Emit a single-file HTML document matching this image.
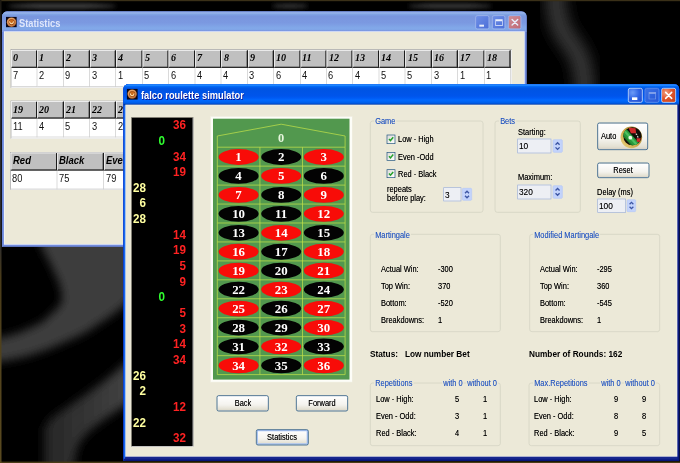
<!DOCTYPE html><html><head><meta charset="utf-8"><title>falco roulette simulator</title><style>
html,body{margin:0;padding:0;background:#000;}
body{width:680px;height:463px;overflow:hidden;position:relative;font-family:"Liberation Sans",sans-serif;}
.root{position:absolute;left:0;top:0;width:1020px;height:694.5px;transform:scale(0.6666667);transform-origin:0 0;overflow:hidden;}
.root div{position:absolute;box-sizing:border-box;white-space:nowrap;}
.tl{position:absolute;left:0;top:0;width:680px;height:463px;overflow:hidden;}
.tl div{position:absolute;white-space:nowrap;line-height:13.333px;}
.t{font-size:8.667px;color:#000;transform:scaleX(0.86);text-shadow:0 0 0.67px rgba(0,0,0,.6);}
.tb{font-size:9.2px;color:#000;font-weight:bold;transform:scaleX(0.9);}
.gl{font-size:8.667px;color:#2456c0;background:#ece9d8;padding:0 1.33px;transform:scaleX(0.86);text-shadow:0 0 0.67px rgba(28,80,200,.45);}
.win{background:#ece9d8;}
.title{color:#fff;font-weight:bold;font-size:10px;text-shadow:0.67px 0.67px #0f1089;transform:scaleX(0.93);}
.grp{border:1px solid #d0d0bf;border-radius:4px;}
.btn{border:1px solid #003c74;border-radius:3px;background:linear-gradient(#fff 0%,#f4f3ee 60%,#e3e0d2 90%,#d6d0c5 100%);font-size:11px;color:#111;text-align:center;}
.inp{border:1px solid #9eb0d4;background:#edeff4;font-size:12px;color:#111;}
.iv{font-size:9.667px;color:#000;transform:scaleX(0.86);text-shadow:0 0 0.67px rgba(0,0,0,.4);}
.spin{background:#c3d3fb;border:1px solid #b5c8f7;border-radius:2px;}
.chk{border:1px solid #1c5180;background:linear-gradient(135deg,#dcdcd7,#fff);}
.hn{font-weight:bold;font-size:12.667px;transform:scaleX(0.92);}
.bn{font-family:"Liberation Serif",serif;font-weight:bold;font-size:15.5px;color:#fff;text-align:center;}
.th{font-family:"Liberation Serif",serif;font-weight:bold;font-style:italic;font-size:10.667px;color:#000;transform:scaleX(0.95);}
.th3{font-weight:bold;font-style:italic;font-size:10px;color:#000;transform:scaleX(0.95);}
.td{font-size:10px;color:#111;transform:scaleX(0.93);}
</style></head><body><div class="root" style="background:#000">
<svg style="position:absolute;left:0;top:0" width="1020" height="694.5" viewBox="0 0 680 463">
<defs><filter id="bl" x="-50%" y="-50%" width="200%" height="200%"><feGaussianBlur stdDeviation="7"/></filter>
<filter id="bl2" x="-50%" y="-50%" width="200%" height="200%"><feGaussianBlur stdDeviation="5"/></filter>
<filter id="bl3" x="-20%" y="-200%" width="140%" height="500%"><feGaussianBlur stdDeviation="2.2"/></filter><linearGradient id="ls" x1="0" y1="0" x2="0" y2="1"><stop offset="0" stop-color="#1c1810"/><stop offset="0.1" stop-color="#2a2a32"/><stop offset="0.52" stop-color="#2c2c30"/><stop offset="0.6" stop-color="#4a3c1a"/><stop offset="1" stop-color="#5a4a20"/></linearGradient><linearGradient id="g2" x1="0" x2="1"><stop offset="0" stop-color="#262626"/><stop offset="1" stop-color="#464646"/></linearGradient></defs>
<rect width="680" height="463" fill="#000"/>
<g filter="url(#bl)" fill="none" stroke-linecap="round">
<path d="M555,-10 C556,20 560,30 572,45 C582,58 584,70 585,95" stroke="#363636" stroke-width="20"/>
</g>
<g filter="url(#bl2)">
<path d="M38,235 L140,235 L140,292 C124,306 112,316 100,323 C90,330 82,335 72,339 C60,344 50,349 40,352 C26,357 12,360 -10,363 L-10,339 C8,337 20,333 30,328 C40,324 46,320 50,315 C58,308 63,304 62,296 C61,286 58,280 55,274 C50,262 46,256 42,248 Z" fill="#3d3d3d"/>
<path d="M140,352 C120,368 104,382 88,393 C74,403 62,410 53,417 C47,422 44,426 44,432 L44,475 L73,475 C74,464 75,454 78,446 C82,438 88,432 93,428 C108,416 124,406 140,396 Z" fill="url(#g2)"/>
</g>
<g filter="url(#bl3)"><ellipse cx="62" cy="6" rx="54" ry="2.6" fill="#444"/><ellipse cx="290" cy="6" rx="18" ry="2.4" fill="#333"/><ellipse cx="450" cy="6" rx="42" ry="2.6" fill="#3a3a3a"/></g>
<rect x="0" y="0" width="680" height="1.2" fill="#3a3018"/>
<rect x="0" y="461.6" width="680" height="1.4" fill="#4a3c18"/>
<rect x="0" y="0" width="1.5" height="463" fill="url(#ls)"/>
</svg>
<div style="left:2.70px;top:16.95px;width:787.05px;height:353.55px;border-radius:8px 8px 0 0;background:#7a93df;overflow:hidden;box-shadow:inset 1.5px 0 #6a86dc, inset -1.5px -1.5px #5e78cf;">
<div style="left:0.00px;top:0.00px;width:787.05px;height:31.50px;background:linear-gradient(to bottom,#7697e7 0%,#7e9ee3 3%,#94afe8 6%,#97b4e9 8%,#82a5e4 14%,#7c9fe2 17%,#7996de 25%,#7b99e1 56%,#82a9e9 81%,#80a5e7 89%,#7b96e1 94%,#7a93df 97%,#abbae3 100%);"></div>
<div style="left:4.20px;top:31.50px;width:778.80px;height:317.55px;background:#ece9d8;box-shadow:0 0 0 1px #f4f6fd;"></div>
<svg style="position:absolute;left:6.00px;top:7.65px" width="16.65" height="16.65" viewBox="0 0 16 16"><defs><radialGradient id="ig1" cx="0.45" cy="0.4" r="0.6"><stop offset="0" stop-color="#f6c090"/><stop offset="0.6" stop-color="#e09a5c"/><stop offset="1" stop-color="#a85a24"/></radialGradient></defs><rect width="16" height="16" fill="#090618"/><circle cx="8" cy="8" r="6.9" fill="url(#ig1)"/><circle cx="8" cy="7.8" r="4.5" fill="#a04c12"/><circle cx="8" cy="7.4" r="3.2" fill="#c86a1c"/><path d="M5.3,7.4 C5.5,11.2 10.5,11.2 10.7,7.4" fill="none" stroke="#ffe6b4" stroke-width="1.5" stroke-linecap="round"/></svg>

<div style="left:710.70px;top:6.45px;width:20.40px;height:20.40px;background:linear-gradient(135deg,#6e8fe6,#4c6fd8);border:1px solid #a9bbee;border-radius:3px;"><div style="left:4.49px;top:12.65px;width:7.34px;height:2.86px;background:#e8eefc"></div></div>
<div style="left:735.00px;top:6.45px;width:20.40px;height:20.40px;background:linear-gradient(135deg,#6e8fe6,#4c6fd8);border:1px solid #a9bbee;border-radius:3px;"><div style="left:4.49px;top:4.49px;width:10.61px;height:10.61px;border:1.2px solid #e8eefc;border-top-width:3px"></div></div>
<div style="left:759.00px;top:6.45px;width:20.70px;height:20.40px;background:linear-gradient(135deg,#cf8f98,#bf6875);border:1px solid #a9bbee;border-radius:3px;"><svg style="position:absolute;left:0;top:0" width="18.70" height="18.70" viewBox="0 0 20 20"><path d="M5.5,5.5 L14.5,14.5 M14.5,5.5 L5.5,14.5" stroke="#e8eefc" stroke-width="2.3" stroke-linecap="round"/></svg></div>
<div style="left:12.90px;top:57.00px;width:751.95px;height:57.75px;background:#fff;border:1px solid #9a9a9a;border-right-color:#e8e8e8;border-bottom-color:#e8e8e8;"></div><div style="left:13.95px;top:58.05px;width:39.45px;height:26.70px;background:#c0c0c0;border-left:1px solid #fff;border-top:1px solid #fff;border-right:2px solid #1c1c1c;border-bottom:2px solid #2c2c2c;"></div><div style="left:13.95px;top:84.75px;width:39.45px;height:28.65px;border-right:1px solid #c8c8c8;border-bottom:1px solid #c8c8c8;"></div><div style="left:53.40px;top:58.05px;width:39.45px;height:26.70px;background:#c0c0c0;border-left:1px solid #fff;border-top:1px solid #fff;border-right:2px solid #1c1c1c;border-bottom:2px solid #2c2c2c;"></div><div style="left:53.40px;top:84.75px;width:39.45px;height:28.65px;border-right:1px solid #c8c8c8;border-bottom:1px solid #c8c8c8;"></div><div style="left:92.85px;top:58.05px;width:39.45px;height:26.70px;background:#c0c0c0;border-left:1px solid #fff;border-top:1px solid #fff;border-right:2px solid #1c1c1c;border-bottom:2px solid #2c2c2c;"></div><div style="left:92.85px;top:84.75px;width:39.45px;height:28.65px;border-right:1px solid #c8c8c8;border-bottom:1px solid #c8c8c8;"></div><div style="left:132.30px;top:58.05px;width:39.45px;height:26.70px;background:#c0c0c0;border-left:1px solid #fff;border-top:1px solid #fff;border-right:2px solid #1c1c1c;border-bottom:2px solid #2c2c2c;"></div><div style="left:132.30px;top:84.75px;width:39.45px;height:28.65px;border-right:1px solid #c8c8c8;border-bottom:1px solid #c8c8c8;"></div><div style="left:171.75px;top:58.05px;width:39.45px;height:26.70px;background:#c0c0c0;border-left:1px solid #fff;border-top:1px solid #fff;border-right:2px solid #1c1c1c;border-bottom:2px solid #2c2c2c;"></div><div style="left:171.75px;top:84.75px;width:39.45px;height:28.65px;border-right:1px solid #c8c8c8;border-bottom:1px solid #c8c8c8;"></div><div style="left:211.20px;top:58.05px;width:39.45px;height:26.70px;background:#c0c0c0;border-left:1px solid #fff;border-top:1px solid #fff;border-right:2px solid #1c1c1c;border-bottom:2px solid #2c2c2c;"></div><div style="left:211.20px;top:84.75px;width:39.45px;height:28.65px;border-right:1px solid #c8c8c8;border-bottom:1px solid #c8c8c8;"></div><div style="left:250.65px;top:58.05px;width:39.45px;height:26.70px;background:#c0c0c0;border-left:1px solid #fff;border-top:1px solid #fff;border-right:2px solid #1c1c1c;border-bottom:2px solid #2c2c2c;"></div><div style="left:250.65px;top:84.75px;width:39.45px;height:28.65px;border-right:1px solid #c8c8c8;border-bottom:1px solid #c8c8c8;"></div><div style="left:290.10px;top:58.05px;width:39.45px;height:26.70px;background:#c0c0c0;border-left:1px solid #fff;border-top:1px solid #fff;border-right:2px solid #1c1c1c;border-bottom:2px solid #2c2c2c;"></div><div style="left:290.10px;top:84.75px;width:39.45px;height:28.65px;border-right:1px solid #c8c8c8;border-bottom:1px solid #c8c8c8;"></div><div style="left:329.55px;top:58.05px;width:39.45px;height:26.70px;background:#c0c0c0;border-left:1px solid #fff;border-top:1px solid #fff;border-right:2px solid #1c1c1c;border-bottom:2px solid #2c2c2c;"></div><div style="left:329.55px;top:84.75px;width:39.45px;height:28.65px;border-right:1px solid #c8c8c8;border-bottom:1px solid #c8c8c8;"></div><div style="left:369.00px;top:58.05px;width:39.45px;height:26.70px;background:#c0c0c0;border-left:1px solid #fff;border-top:1px solid #fff;border-right:2px solid #1c1c1c;border-bottom:2px solid #2c2c2c;"></div><div style="left:369.00px;top:84.75px;width:39.45px;height:28.65px;border-right:1px solid #c8c8c8;border-bottom:1px solid #c8c8c8;"></div><div style="left:408.45px;top:58.05px;width:39.45px;height:26.70px;background:#c0c0c0;border-left:1px solid #fff;border-top:1px solid #fff;border-right:2px solid #1c1c1c;border-bottom:2px solid #2c2c2c;"></div><div style="left:408.45px;top:84.75px;width:39.45px;height:28.65px;border-right:1px solid #c8c8c8;border-bottom:1px solid #c8c8c8;"></div><div style="left:447.90px;top:58.05px;width:39.45px;height:26.70px;background:#c0c0c0;border-left:1px solid #fff;border-top:1px solid #fff;border-right:2px solid #1c1c1c;border-bottom:2px solid #2c2c2c;"></div><div style="left:447.90px;top:84.75px;width:39.45px;height:28.65px;border-right:1px solid #c8c8c8;border-bottom:1px solid #c8c8c8;"></div><div style="left:487.35px;top:58.05px;width:39.45px;height:26.70px;background:#c0c0c0;border-left:1px solid #fff;border-top:1px solid #fff;border-right:2px solid #1c1c1c;border-bottom:2px solid #2c2c2c;"></div><div style="left:487.35px;top:84.75px;width:39.45px;height:28.65px;border-right:1px solid #c8c8c8;border-bottom:1px solid #c8c8c8;"></div><div style="left:526.80px;top:58.05px;width:39.45px;height:26.70px;background:#c0c0c0;border-left:1px solid #fff;border-top:1px solid #fff;border-right:2px solid #1c1c1c;border-bottom:2px solid #2c2c2c;"></div><div style="left:526.80px;top:84.75px;width:39.45px;height:28.65px;border-right:1px solid #c8c8c8;border-bottom:1px solid #c8c8c8;"></div><div style="left:566.25px;top:58.05px;width:39.45px;height:26.70px;background:#c0c0c0;border-left:1px solid #fff;border-top:1px solid #fff;border-right:2px solid #1c1c1c;border-bottom:2px solid #2c2c2c;"></div><div style="left:566.25px;top:84.75px;width:39.45px;height:28.65px;border-right:1px solid #c8c8c8;border-bottom:1px solid #c8c8c8;"></div><div style="left:605.70px;top:58.05px;width:39.45px;height:26.70px;background:#c0c0c0;border-left:1px solid #fff;border-top:1px solid #fff;border-right:2px solid #1c1c1c;border-bottom:2px solid #2c2c2c;"></div><div style="left:605.70px;top:84.75px;width:39.45px;height:28.65px;border-right:1px solid #c8c8c8;border-bottom:1px solid #c8c8c8;"></div><div style="left:645.15px;top:58.05px;width:39.45px;height:26.70px;background:#c0c0c0;border-left:1px solid #fff;border-top:1px solid #fff;border-right:2px solid #1c1c1c;border-bottom:2px solid #2c2c2c;"></div><div style="left:645.15px;top:84.75px;width:39.45px;height:28.65px;border-right:1px solid #c8c8c8;border-bottom:1px solid #c8c8c8;"></div><div style="left:684.60px;top:58.05px;width:39.45px;height:26.70px;background:#c0c0c0;border-left:1px solid #fff;border-top:1px solid #fff;border-right:2px solid #1c1c1c;border-bottom:2px solid #2c2c2c;"></div><div style="left:684.60px;top:84.75px;width:39.45px;height:28.65px;border-right:1px solid #c8c8c8;border-bottom:1px solid #c8c8c8;"></div><div style="left:724.05px;top:58.05px;width:39.45px;height:26.70px;background:#c0c0c0;border-left:1px solid #fff;border-top:1px solid #fff;border-right:2px solid #1c1c1c;border-bottom:2px solid #2c2c2c;"></div><div style="left:724.05px;top:84.75px;width:39.45px;height:28.65px;border-right:1px solid #c8c8c8;border-bottom:1px solid #c8c8c8;"></div>
<div style="left:12.90px;top:134.40px;width:712.50px;height:56.40px;background:#fff;border:1px solid #9a9a9a;border-right-color:#e8e8e8;border-bottom-color:#e8e8e8;"></div><div style="left:13.95px;top:135.45px;width:39.45px;height:25.95px;background:#c0c0c0;border-left:1px solid #fff;border-top:1px solid #fff;border-right:2px solid #1c1c1c;border-bottom:2px solid #2c2c2c;"></div><div style="left:13.95px;top:161.40px;width:39.45px;height:28.05px;border-right:1px solid #c8c8c8;border-bottom:1px solid #c8c8c8;"></div><div style="left:53.40px;top:135.45px;width:39.45px;height:25.95px;background:#c0c0c0;border-left:1px solid #fff;border-top:1px solid #fff;border-right:2px solid #1c1c1c;border-bottom:2px solid #2c2c2c;"></div><div style="left:53.40px;top:161.40px;width:39.45px;height:28.05px;border-right:1px solid #c8c8c8;border-bottom:1px solid #c8c8c8;"></div><div style="left:92.85px;top:135.45px;width:39.45px;height:25.95px;background:#c0c0c0;border-left:1px solid #fff;border-top:1px solid #fff;border-right:2px solid #1c1c1c;border-bottom:2px solid #2c2c2c;"></div><div style="left:92.85px;top:161.40px;width:39.45px;height:28.05px;border-right:1px solid #c8c8c8;border-bottom:1px solid #c8c8c8;"></div><div style="left:132.30px;top:135.45px;width:39.45px;height:25.95px;background:#c0c0c0;border-left:1px solid #fff;border-top:1px solid #fff;border-right:2px solid #1c1c1c;border-bottom:2px solid #2c2c2c;"></div><div style="left:132.30px;top:161.40px;width:39.45px;height:28.05px;border-right:1px solid #c8c8c8;border-bottom:1px solid #c8c8c8;"></div><div style="left:171.75px;top:135.45px;width:39.45px;height:25.95px;background:#c0c0c0;border-left:1px solid #fff;border-top:1px solid #fff;border-right:2px solid #1c1c1c;border-bottom:2px solid #2c2c2c;"></div><div style="left:171.75px;top:161.40px;width:39.45px;height:28.05px;border-right:1px solid #c8c8c8;border-bottom:1px solid #c8c8c8;"></div><div style="left:211.20px;top:135.45px;width:39.45px;height:25.95px;background:#c0c0c0;border-left:1px solid #fff;border-top:1px solid #fff;border-right:2px solid #1c1c1c;border-bottom:2px solid #2c2c2c;"></div><div style="left:211.20px;top:161.40px;width:39.45px;height:28.05px;border-right:1px solid #c8c8c8;border-bottom:1px solid #c8c8c8;"></div><div style="left:250.65px;top:135.45px;width:39.45px;height:25.95px;background:#c0c0c0;border-left:1px solid #fff;border-top:1px solid #fff;border-right:2px solid #1c1c1c;border-bottom:2px solid #2c2c2c;"></div><div style="left:250.65px;top:161.40px;width:39.45px;height:28.05px;border-right:1px solid #c8c8c8;border-bottom:1px solid #c8c8c8;"></div><div style="left:290.10px;top:135.45px;width:39.45px;height:25.95px;background:#c0c0c0;border-left:1px solid #fff;border-top:1px solid #fff;border-right:2px solid #1c1c1c;border-bottom:2px solid #2c2c2c;"></div><div style="left:290.10px;top:161.40px;width:39.45px;height:28.05px;border-right:1px solid #c8c8c8;border-bottom:1px solid #c8c8c8;"></div><div style="left:329.55px;top:135.45px;width:39.45px;height:25.95px;background:#c0c0c0;border-left:1px solid #fff;border-top:1px solid #fff;border-right:2px solid #1c1c1c;border-bottom:2px solid #2c2c2c;"></div><div style="left:329.55px;top:161.40px;width:39.45px;height:28.05px;border-right:1px solid #c8c8c8;border-bottom:1px solid #c8c8c8;"></div><div style="left:369.00px;top:135.45px;width:39.45px;height:25.95px;background:#c0c0c0;border-left:1px solid #fff;border-top:1px solid #fff;border-right:2px solid #1c1c1c;border-bottom:2px solid #2c2c2c;"></div><div style="left:369.00px;top:161.40px;width:39.45px;height:28.05px;border-right:1px solid #c8c8c8;border-bottom:1px solid #c8c8c8;"></div><div style="left:408.45px;top:135.45px;width:39.45px;height:25.95px;background:#c0c0c0;border-left:1px solid #fff;border-top:1px solid #fff;border-right:2px solid #1c1c1c;border-bottom:2px solid #2c2c2c;"></div><div style="left:408.45px;top:161.40px;width:39.45px;height:28.05px;border-right:1px solid #c8c8c8;border-bottom:1px solid #c8c8c8;"></div><div style="left:447.90px;top:135.45px;width:39.45px;height:25.95px;background:#c0c0c0;border-left:1px solid #fff;border-top:1px solid #fff;border-right:2px solid #1c1c1c;border-bottom:2px solid #2c2c2c;"></div><div style="left:447.90px;top:161.40px;width:39.45px;height:28.05px;border-right:1px solid #c8c8c8;border-bottom:1px solid #c8c8c8;"></div><div style="left:487.35px;top:135.45px;width:39.45px;height:25.95px;background:#c0c0c0;border-left:1px solid #fff;border-top:1px solid #fff;border-right:2px solid #1c1c1c;border-bottom:2px solid #2c2c2c;"></div><div style="left:487.35px;top:161.40px;width:39.45px;height:28.05px;border-right:1px solid #c8c8c8;border-bottom:1px solid #c8c8c8;"></div><div style="left:526.80px;top:135.45px;width:39.45px;height:25.95px;background:#c0c0c0;border-left:1px solid #fff;border-top:1px solid #fff;border-right:2px solid #1c1c1c;border-bottom:2px solid #2c2c2c;"></div><div style="left:526.80px;top:161.40px;width:39.45px;height:28.05px;border-right:1px solid #c8c8c8;border-bottom:1px solid #c8c8c8;"></div><div style="left:566.25px;top:135.45px;width:39.45px;height:25.95px;background:#c0c0c0;border-left:1px solid #fff;border-top:1px solid #fff;border-right:2px solid #1c1c1c;border-bottom:2px solid #2c2c2c;"></div><div style="left:566.25px;top:161.40px;width:39.45px;height:28.05px;border-right:1px solid #c8c8c8;border-bottom:1px solid #c8c8c8;"></div><div style="left:605.70px;top:135.45px;width:39.45px;height:25.95px;background:#c0c0c0;border-left:1px solid #fff;border-top:1px solid #fff;border-right:2px solid #1c1c1c;border-bottom:2px solid #2c2c2c;"></div><div style="left:605.70px;top:161.40px;width:39.45px;height:28.05px;border-right:1px solid #c8c8c8;border-bottom:1px solid #c8c8c8;"></div><div style="left:645.15px;top:135.45px;width:39.45px;height:25.95px;background:#c0c0c0;border-left:1px solid #fff;border-top:1px solid #fff;border-right:2px solid #1c1c1c;border-bottom:2px solid #2c2c2c;"></div><div style="left:645.15px;top:161.40px;width:39.45px;height:28.05px;border-right:1px solid #c8c8c8;border-bottom:1px solid #c8c8c8;"></div><div style="left:684.60px;top:135.45px;width:39.45px;height:25.95px;background:#c0c0c0;border-left:1px solid #fff;border-top:1px solid #fff;border-right:2px solid #1c1c1c;border-bottom:2px solid #2c2c2c;"></div><div style="left:684.60px;top:161.40px;width:39.45px;height:28.05px;border-right:1px solid #c8c8c8;border-bottom:1px solid #c8c8c8;"></div>
<div style="left:12.45px;top:211.20px;width:421.80px;height:57.15px;background:#fff;border:1px solid #9a9a9a;border-right-color:#e8e8e8;border-bottom-color:#e8e8e8;"></div><div style="left:13.50px;top:212.25px;width:69.90px;height:26.70px;background:#c0c0c0;border-left:1px solid #fff;border-top:1px solid #fff;border-right:2px solid #1c1c1c;border-bottom:2px solid #2c2c2c;"></div><div style="left:13.50px;top:238.95px;width:69.90px;height:28.05px;border-right:1px solid #c8c8c8;border-bottom:1px solid #c8c8c8;"></div><div style="left:83.40px;top:212.25px;width:69.90px;height:26.70px;background:#c0c0c0;border-left:1px solid #fff;border-top:1px solid #fff;border-right:2px solid #1c1c1c;border-bottom:2px solid #2c2c2c;"></div><div style="left:83.40px;top:238.95px;width:69.90px;height:28.05px;border-right:1px solid #c8c8c8;border-bottom:1px solid #c8c8c8;"></div><div style="left:153.30px;top:212.25px;width:69.90px;height:26.70px;background:#c0c0c0;border-left:1px solid #fff;border-top:1px solid #fff;border-right:2px solid #1c1c1c;border-bottom:2px solid #2c2c2c;"></div><div style="left:153.30px;top:238.95px;width:69.90px;height:28.05px;border-right:1px solid #c8c8c8;border-bottom:1px solid #c8c8c8;"></div><div style="left:223.20px;top:212.25px;width:69.90px;height:26.70px;background:#c0c0c0;border-left:1px solid #fff;border-top:1px solid #fff;border-right:2px solid #1c1c1c;border-bottom:2px solid #2c2c2c;"></div><div style="left:223.20px;top:238.95px;width:69.90px;height:28.05px;border-right:1px solid #c8c8c8;border-bottom:1px solid #c8c8c8;"></div><div style="left:293.10px;top:212.25px;width:69.90px;height:26.70px;background:#c0c0c0;border-left:1px solid #fff;border-top:1px solid #fff;border-right:2px solid #1c1c1c;border-bottom:2px solid #2c2c2c;"></div><div style="left:293.10px;top:238.95px;width:69.90px;height:28.05px;border-right:1px solid #c8c8c8;border-bottom:1px solid #c8c8c8;"></div><div style="left:363.00px;top:212.25px;width:69.90px;height:26.70px;background:#c0c0c0;border-left:1px solid #fff;border-top:1px solid #fff;border-right:2px solid #1c1c1c;border-bottom:2px solid #2c2c2c;"></div><div style="left:363.00px;top:238.95px;width:69.90px;height:28.05px;border-right:1px solid #c8c8c8;border-bottom:1px solid #c8c8c8;"></div>
</div></div>
<div class="tl"><div class="title" style="top:17.13px;left:19.30px;transform-origin:0 50%;color:#dfe7fb;text-shadow:none;">Statistics</div><div class="th" style="top:51.33px;left:13.10px;transform-origin:0 50%;">0</div><div class="td" style="top:69.48px;left:12.70px;transform-origin:0 50%;">7</div><div class="th" style="top:51.33px;left:39.40px;transform-origin:0 50%;">1</div><div class="td" style="top:69.48px;left:39.00px;transform-origin:0 50%;">2</div><div class="th" style="top:51.33px;left:65.70px;transform-origin:0 50%;">2</div><div class="td" style="top:69.48px;left:65.30px;transform-origin:0 50%;">9</div><div class="th" style="top:51.33px;left:92.00px;transform-origin:0 50%;">3</div><div class="td" style="top:69.48px;left:91.60px;transform-origin:0 50%;">3</div><div class="th" style="top:51.33px;left:118.30px;transform-origin:0 50%;">4</div><div class="td" style="top:69.48px;left:117.90px;transform-origin:0 50%;">1</div><div class="th" style="top:51.33px;left:144.60px;transform-origin:0 50%;">5</div><div class="td" style="top:69.48px;left:144.20px;transform-origin:0 50%;">5</div><div class="th" style="top:51.33px;left:170.90px;transform-origin:0 50%;">6</div><div class="td" style="top:69.48px;left:170.50px;transform-origin:0 50%;">6</div><div class="th" style="top:51.33px;left:197.20px;transform-origin:0 50%;">7</div><div class="td" style="top:69.48px;left:196.80px;transform-origin:0 50%;">4</div><div class="th" style="top:51.33px;left:223.50px;transform-origin:0 50%;">8</div><div class="td" style="top:69.48px;left:223.10px;transform-origin:0 50%;">4</div><div class="th" style="top:51.33px;left:249.80px;transform-origin:0 50%;">9</div><div class="td" style="top:69.48px;left:249.40px;transform-origin:0 50%;">3</div><div class="th" style="top:51.33px;left:276.10px;transform-origin:0 50%;">10</div><div class="td" style="top:69.48px;left:275.70px;transform-origin:0 50%;">6</div><div class="th" style="top:51.33px;left:302.40px;transform-origin:0 50%;">11</div><div class="td" style="top:69.48px;left:302.00px;transform-origin:0 50%;">4</div><div class="th" style="top:51.33px;left:328.70px;transform-origin:0 50%;">12</div><div class="td" style="top:69.48px;left:328.30px;transform-origin:0 50%;">6</div><div class="th" style="top:51.33px;left:355.00px;transform-origin:0 50%;">13</div><div class="td" style="top:69.48px;left:354.60px;transform-origin:0 50%;">4</div><div class="th" style="top:51.33px;left:381.30px;transform-origin:0 50%;">14</div><div class="td" style="top:69.48px;left:380.90px;transform-origin:0 50%;">5</div><div class="th" style="top:51.33px;left:407.60px;transform-origin:0 50%;">15</div><div class="td" style="top:69.48px;left:407.20px;transform-origin:0 50%;">5</div><div class="th" style="top:51.33px;left:433.90px;transform-origin:0 50%;">16</div><div class="td" style="top:69.48px;left:433.50px;transform-origin:0 50%;">3</div><div class="th" style="top:51.33px;left:460.20px;transform-origin:0 50%;">17</div><div class="td" style="top:69.48px;left:459.80px;transform-origin:0 50%;">1</div><div class="th" style="top:51.33px;left:486.50px;transform-origin:0 50%;">18</div><div class="td" style="top:69.48px;left:486.10px;transform-origin:0 50%;">1</div><div class="th" style="top:102.68px;left:13.10px;transform-origin:0 50%;">19</div><div class="td" style="top:120.38px;left:12.70px;transform-origin:0 50%;">11</div><div class="th" style="top:102.68px;left:39.40px;transform-origin:0 50%;">20</div><div class="td" style="top:120.38px;left:39.00px;transform-origin:0 50%;">4</div><div class="th" style="top:102.68px;left:65.70px;transform-origin:0 50%;">21</div><div class="td" style="top:120.38px;left:65.30px;transform-origin:0 50%;">5</div><div class="th" style="top:102.68px;left:92.00px;transform-origin:0 50%;">22</div><div class="td" style="top:120.38px;left:91.60px;transform-origin:0 50%;">3</div><div class="th" style="top:102.68px;left:118.30px;transform-origin:0 50%;">23</div><div class="td" style="top:120.38px;left:117.90px;transform-origin:0 50%;">2</div><div class="th" style="top:102.68px;left:144.60px;transform-origin:0 50%;">24</div><div class="td" style="top:120.38px;left:144.20px;transform-origin:0 50%;">6</div><div class="th" style="top:102.68px;left:170.90px;transform-origin:0 50%;">25</div><div class="td" style="top:120.38px;left:170.50px;transform-origin:0 50%;">3</div><div class="th" style="top:102.68px;left:197.20px;transform-origin:0 50%;">26</div><div class="td" style="top:120.38px;left:196.80px;transform-origin:0 50%;">4</div><div class="th" style="top:102.68px;left:223.50px;transform-origin:0 50%;">27</div><div class="td" style="top:120.38px;left:223.10px;transform-origin:0 50%;">2</div><div class="th" style="top:102.68px;left:249.80px;transform-origin:0 50%;">28</div><div class="td" style="top:120.38px;left:249.40px;transform-origin:0 50%;">5</div><div class="th" style="top:102.68px;left:276.10px;transform-origin:0 50%;">29</div><div class="td" style="top:120.38px;left:275.70px;transform-origin:0 50%;">7</div><div class="th" style="top:102.68px;left:302.40px;transform-origin:0 50%;">30</div><div class="td" style="top:120.38px;left:302.00px;transform-origin:0 50%;">3</div><div class="th" style="top:102.68px;left:328.70px;transform-origin:0 50%;">31</div><div class="td" style="top:120.38px;left:328.30px;transform-origin:0 50%;">6</div><div class="th" style="top:102.68px;left:355.00px;transform-origin:0 50%;">32</div><div class="td" style="top:120.38px;left:354.60px;transform-origin:0 50%;">4</div><div class="th" style="top:102.68px;left:381.30px;transform-origin:0 50%;">33</div><div class="td" style="top:120.38px;left:380.90px;transform-origin:0 50%;">3</div><div class="th" style="top:102.68px;left:407.60px;transform-origin:0 50%;">34</div><div class="td" style="top:120.38px;left:407.20px;transform-origin:0 50%;">5</div><div class="th" style="top:102.68px;left:433.90px;transform-origin:0 50%;">35</div><div class="td" style="top:120.38px;left:433.50px;transform-origin:0 50%;">4</div><div class="th" style="top:102.68px;left:460.20px;transform-origin:0 50%;">36</div><div class="td" style="top:120.38px;left:459.80px;transform-origin:0 50%;">6</div><div class="th3" style="top:154.13px;left:12.80px;transform-origin:0 50%;">Red</div><div class="td" style="top:172.08px;left:12.40px;transform-origin:0 50%;">80</div><div class="th3" style="top:154.13px;left:59.40px;transform-origin:0 50%;">Black</div><div class="td" style="top:172.08px;left:59.00px;transform-origin:0 50%;">75</div><div class="th3" style="top:154.13px;left:106.00px;transform-origin:0 50%;">Even</div><div class="td" style="top:172.08px;left:105.60px;transform-origin:0 50%;">79</div><div class="th3" style="top:154.13px;left:152.60px;transform-origin:0 50%;">Odd</div><div class="td" style="top:172.08px;left:152.20px;transform-origin:0 50%;">76</div><div class="th3" style="top:154.13px;left:199.20px;transform-origin:0 50%;">Low</div><div class="td" style="top:172.08px;left:198.80px;transform-origin:0 50%;">82</div><div class="th3" style="top:154.13px;left:245.80px;transform-origin:0 50%;">High</div><div class="td" style="top:172.08px;left:245.40px;transform-origin:0 50%;">73</div></div>
<div class="root">
<div style="left:184.50px;top:126.45px;width:834.90px;height:565.05px;border-radius:8px 8px 0 0;background:#14248a;overflow:hidden;box-shadow:inset -1px -1px #000f70, inset 1px 1px #0831d9, inset -3px -3px #0c1c84, inset 2.5px 2.5px #166aee, inset -5px -5px #182890, inset 4px 4px #0855dd;">
<div style="left:0.00px;top:0.00px;width:834.90px;height:31.65px;background:linear-gradient(to bottom,#0058ee 0%,#3593ff 4%,#288eff 6%,#127dff 8%,#036ffc 10%,#0262ee 14%,#0057e5 20%,#0054e3 24%,#0055eb 56%,#005bf5 66%,#026afe 76%,#0062ef 86%,#0052d6 92%,#0040ab 94%,#003092 100%);"></div>
<div style="left:4.20px;top:31.65px;width:826.20px;height:526.20px;background:#ece9d8;box-shadow:0 0 0 1px #f6f6f2;"></div>
<svg style="position:absolute;left:5.55px;top:6.75px" width="16.50" height="16.35" viewBox="0 0 16 16"><defs><radialGradient id="ig2" cx="0.45" cy="0.4" r="0.6"><stop offset="0" stop-color="#f6c090"/><stop offset="0.6" stop-color="#e09a5c"/><stop offset="1" stop-color="#a85a24"/></radialGradient></defs><rect width="16" height="16" fill="#090618"/><circle cx="8" cy="8" r="6.9" fill="url(#ig2)"/><circle cx="8" cy="7.8" r="4.5" fill="#a04c12"/><circle cx="8" cy="7.4" r="3.2" fill="#c86a1c"/><path d="M5.3,7.4 C5.5,11.2 10.5,11.2 10.7,7.4" fill="none" stroke="#ffe6b4" stroke-width="1.5" stroke-linecap="round"/></svg>

<div style="left:757.50px;top:5.40px;width:22.05px;height:22.20px;background:radial-gradient(circle at 30% 30%,#6d9cf7 0%,#2f63e4 50%,#1f48c8 100%);border:1px solid #fff;border-radius:3px;"><div style="left:4.85px;top:13.67px;width:7.94px;height:3.09px;background:#fff"></div></div>
<div style="left:782.40px;top:5.40px;width:22.05px;height:22.20px;background:linear-gradient(135deg,#3a72e6,#2456d8);border:1px solid #7f9fef;border-radius:3px;"><div style="left:4.85px;top:4.85px;width:11.47px;height:11.47px;border:1.2px solid #7d9eea;border-top-width:3px"></div></div>
<div style="left:807.30px;top:5.40px;width:22.05px;height:22.20px;background:radial-gradient(circle at 30% 30%,#f0a080 0%,#e0562e 45%,#c23a12 100%);border:1px solid #fff;border-radius:3px;"><svg style="position:absolute;left:0;top:0" width="20.05" height="20.05" viewBox="0 0 20 20"><path d="M5.5,5.5 L14.5,14.5 M14.5,5.5 L5.5,14.5" stroke="#fff" stroke-width="2.3" stroke-linecap="round"/></svg></div>
<div style="left:12.75px;top:49.50px;width:92.70px;height:493.65px;background:#000;border:1px solid #9c9a8c;border-right-color:#fff;border-bottom-color:#fff;"></div>





















<svg style="position:absolute;left:130.35px;top:47.85px" width="214.05" height="399.90" viewBox="209.9 116.2 142.70000000000002 266.6"><rect x="209.9" y="116.2" width="142.70000000000002" height="266.6" fill="#f1efe2"/><rect x="210.9" y="117.1" width="140.99999999999997" height="264.9" fill="#fdfdf8"/><rect x="212.9" y="118.9" width="136.49999999999997" height="260.9" fill="#52984e"/><g stroke="#bfe04a" stroke-width="0.75" fill="none"><path d="M217.2,147.4 L217.2,136.2 L281.1,124.4 L345.0,136.2 L345.0,147.4"/><path d="M217.2,147.4 L217.2,374.80"/><path d="M259.8,147.4 L259.8,374.80"/><path d="M302.4,147.4 L302.4,374.80"/><path d="M345.0,147.4 L345.0,374.80"/><path d="M217.2,147.40 L345.0,147.40"/><path d="M217.2,166.35 L345.0,166.35"/><path d="M217.2,185.30 L345.0,185.30"/><path d="M217.2,204.25 L345.0,204.25"/><path d="M217.2,223.20 L345.0,223.20"/><path d="M217.2,242.15 L345.0,242.15"/><path d="M217.2,261.10 L345.0,261.10"/><path d="M217.2,280.05 L345.0,280.05"/><path d="M217.2,299.00 L345.0,299.00"/><path d="M217.2,317.95 L345.0,317.95"/><path d="M217.2,336.90 L345.0,336.90"/><path d="M217.2,355.85 L345.0,355.85"/><path d="M217.2,374.80 L345.0,374.80"/></g><ellipse cx="238.50" cy="157.18" rx="20.0" ry="7.9" fill="#f80c08"/><text x="238.50" y="161.43" text-anchor="middle" font-family="Liberation Serif, serif" font-weight="bold" font-size="12.9" fill="#fff">1</text><ellipse cx="281.10" cy="157.18" rx="20.0" ry="7.9" fill="#030303"/><text x="281.10" y="161.43" text-anchor="middle" font-family="Liberation Serif, serif" font-weight="bold" font-size="12.9" fill="#fff">2</text><ellipse cx="323.70" cy="157.18" rx="20.0" ry="7.9" fill="#f80c08"/><text x="323.70" y="161.43" text-anchor="middle" font-family="Liberation Serif, serif" font-weight="bold" font-size="12.9" fill="#fff">3</text><ellipse cx="238.50" cy="176.12" rx="20.0" ry="7.9" fill="#030303"/><text x="238.50" y="180.38" text-anchor="middle" font-family="Liberation Serif, serif" font-weight="bold" font-size="12.9" fill="#fff">4</text><ellipse cx="281.10" cy="176.12" rx="20.0" ry="7.9" fill="#f80c08"/><text x="281.10" y="180.38" text-anchor="middle" font-family="Liberation Serif, serif" font-weight="bold" font-size="12.9" fill="#fff">5</text><ellipse cx="323.70" cy="176.12" rx="20.0" ry="7.9" fill="#030303"/><text x="323.70" y="180.38" text-anchor="middle" font-family="Liberation Serif, serif" font-weight="bold" font-size="12.9" fill="#fff">6</text><ellipse cx="238.50" cy="195.08" rx="20.0" ry="7.9" fill="#f80c08"/><text x="238.50" y="199.33" text-anchor="middle" font-family="Liberation Serif, serif" font-weight="bold" font-size="12.9" fill="#fff">7</text><ellipse cx="281.10" cy="195.08" rx="20.0" ry="7.9" fill="#030303"/><text x="281.10" y="199.33" text-anchor="middle" font-family="Liberation Serif, serif" font-weight="bold" font-size="12.9" fill="#fff">8</text><ellipse cx="323.70" cy="195.08" rx="20.0" ry="7.9" fill="#f80c08"/><text x="323.70" y="199.33" text-anchor="middle" font-family="Liberation Serif, serif" font-weight="bold" font-size="12.9" fill="#fff">9</text><ellipse cx="238.50" cy="214.03" rx="20.0" ry="7.9" fill="#030303"/><text x="238.50" y="218.28" text-anchor="middle" font-family="Liberation Serif, serif" font-weight="bold" font-size="12.9" fill="#fff">10</text><ellipse cx="281.10" cy="214.03" rx="20.0" ry="7.9" fill="#030303"/><text x="281.10" y="218.28" text-anchor="middle" font-family="Liberation Serif, serif" font-weight="bold" font-size="12.9" fill="#fff">11</text><ellipse cx="323.70" cy="214.03" rx="20.0" ry="7.9" fill="#f80c08"/><text x="323.70" y="218.28" text-anchor="middle" font-family="Liberation Serif, serif" font-weight="bold" font-size="12.9" fill="#fff">12</text><ellipse cx="238.50" cy="232.98" rx="20.0" ry="7.9" fill="#030303"/><text x="238.50" y="237.23" text-anchor="middle" font-family="Liberation Serif, serif" font-weight="bold" font-size="12.9" fill="#fff">13</text><ellipse cx="281.10" cy="232.98" rx="20.0" ry="7.9" fill="#f80c08"/><text x="281.10" y="237.23" text-anchor="middle" font-family="Liberation Serif, serif" font-weight="bold" font-size="12.9" fill="#fff">14</text><ellipse cx="323.70" cy="232.98" rx="20.0" ry="7.9" fill="#030303"/><text x="323.70" y="237.23" text-anchor="middle" font-family="Liberation Serif, serif" font-weight="bold" font-size="12.9" fill="#fff">15</text><ellipse cx="238.50" cy="251.93" rx="20.0" ry="7.9" fill="#f80c08"/><text x="238.50" y="256.18" text-anchor="middle" font-family="Liberation Serif, serif" font-weight="bold" font-size="12.9" fill="#fff">16</text><ellipse cx="281.10" cy="251.93" rx="20.0" ry="7.9" fill="#030303"/><text x="281.10" y="256.18" text-anchor="middle" font-family="Liberation Serif, serif" font-weight="bold" font-size="12.9" fill="#fff">17</text><ellipse cx="323.70" cy="251.93" rx="20.0" ry="7.9" fill="#f80c08"/><text x="323.70" y="256.18" text-anchor="middle" font-family="Liberation Serif, serif" font-weight="bold" font-size="12.9" fill="#fff">18</text><ellipse cx="238.50" cy="270.88" rx="20.0" ry="7.9" fill="#f80c08"/><text x="238.50" y="275.12" text-anchor="middle" font-family="Liberation Serif, serif" font-weight="bold" font-size="12.9" fill="#fff">19</text><ellipse cx="281.10" cy="270.88" rx="20.0" ry="7.9" fill="#030303"/><text x="281.10" y="275.12" text-anchor="middle" font-family="Liberation Serif, serif" font-weight="bold" font-size="12.9" fill="#fff">20</text><ellipse cx="323.70" cy="270.88" rx="20.0" ry="7.9" fill="#f80c08"/><text x="323.70" y="275.12" text-anchor="middle" font-family="Liberation Serif, serif" font-weight="bold" font-size="12.9" fill="#fff">21</text><ellipse cx="238.50" cy="289.82" rx="20.0" ry="7.9" fill="#030303"/><text x="238.50" y="294.07" text-anchor="middle" font-family="Liberation Serif, serif" font-weight="bold" font-size="12.9" fill="#fff">22</text><ellipse cx="281.10" cy="289.82" rx="20.0" ry="7.9" fill="#f80c08"/><text x="281.10" y="294.07" text-anchor="middle" font-family="Liberation Serif, serif" font-weight="bold" font-size="12.9" fill="#fff">23</text><ellipse cx="323.70" cy="289.82" rx="20.0" ry="7.9" fill="#030303"/><text x="323.70" y="294.07" text-anchor="middle" font-family="Liberation Serif, serif" font-weight="bold" font-size="12.9" fill="#fff">24</text><ellipse cx="238.50" cy="308.78" rx="20.0" ry="7.9" fill="#f80c08"/><text x="238.50" y="313.03" text-anchor="middle" font-family="Liberation Serif, serif" font-weight="bold" font-size="12.9" fill="#fff">25</text><ellipse cx="281.10" cy="308.78" rx="20.0" ry="7.9" fill="#030303"/><text x="281.10" y="313.03" text-anchor="middle" font-family="Liberation Serif, serif" font-weight="bold" font-size="12.9" fill="#fff">26</text><ellipse cx="323.70" cy="308.78" rx="20.0" ry="7.9" fill="#f80c08"/><text x="323.70" y="313.03" text-anchor="middle" font-family="Liberation Serif, serif" font-weight="bold" font-size="12.9" fill="#fff">27</text><ellipse cx="238.50" cy="327.73" rx="20.0" ry="7.9" fill="#030303"/><text x="238.50" y="331.98" text-anchor="middle" font-family="Liberation Serif, serif" font-weight="bold" font-size="12.9" fill="#fff">28</text><ellipse cx="281.10" cy="327.73" rx="20.0" ry="7.9" fill="#030303"/><text x="281.10" y="331.98" text-anchor="middle" font-family="Liberation Serif, serif" font-weight="bold" font-size="12.9" fill="#fff">29</text><ellipse cx="323.70" cy="327.73" rx="20.0" ry="7.9" fill="#f80c08"/><text x="323.70" y="331.98" text-anchor="middle" font-family="Liberation Serif, serif" font-weight="bold" font-size="12.9" fill="#fff">30</text><ellipse cx="238.50" cy="346.68" rx="20.0" ry="7.9" fill="#030303"/><text x="238.50" y="350.93" text-anchor="middle" font-family="Liberation Serif, serif" font-weight="bold" font-size="12.9" fill="#fff">31</text><ellipse cx="281.10" cy="346.68" rx="20.0" ry="7.9" fill="#f80c08"/><text x="281.10" y="350.93" text-anchor="middle" font-family="Liberation Serif, serif" font-weight="bold" font-size="12.9" fill="#fff">32</text><ellipse cx="323.70" cy="346.68" rx="20.0" ry="7.9" fill="#030303"/><text x="323.70" y="350.93" text-anchor="middle" font-family="Liberation Serif, serif" font-weight="bold" font-size="12.9" fill="#fff">33</text><ellipse cx="238.50" cy="365.62" rx="20.0" ry="7.9" fill="#f80c08"/><text x="238.50" y="369.88" text-anchor="middle" font-family="Liberation Serif, serif" font-weight="bold" font-size="12.9" fill="#fff">34</text><ellipse cx="281.10" cy="365.62" rx="20.0" ry="7.9" fill="#030303"/><text x="281.10" y="369.88" text-anchor="middle" font-family="Liberation Serif, serif" font-weight="bold" font-size="12.9" fill="#fff">35</text><ellipse cx="323.70" cy="365.62" rx="20.0" ry="7.9" fill="#f80c08"/><text x="323.70" y="369.88" text-anchor="middle" font-family="Liberation Serif, serif" font-weight="bold" font-size="12.9" fill="#fff">36</text><text x="281.1" y="142.3" text-anchor="middle" font-family="Liberation Serif, serif" font-weight="bold" font-size="12.4" fill="#e6f6dc">0</text></svg>
<div class="btn" style="left:140.10px;top:466.65px;width:78.90px;height:24.15px;"></div>
<div class="btn" style="left:259.20px;top:466.65px;width:78.60px;height:24.15px;"></div>
<div class="btn" style="left:199.50px;top:517.80px;width:78.60px;height:24.15px;box-shadow:inset 0 0 0 2px #a9c3f2;"></div>
<div class="grp" style="left:370.20px;top:55.05px;width:170.10px;height:137.40px;"></div>
<div class="chk" style="left:395.25px;top:75.75px;width:13.35px;height:13.35px;"><svg style="position:absolute;left:0;top:0" width="11.3" height="11.3" viewBox="0 0 11 11"><path d="M2.4,5.2 L4.6,7.6 L8.6,2.8" fill="none" stroke="#25a02c" stroke-width="2.2"/></svg></div>

<div class="chk" style="left:395.25px;top:101.55px;width:13.35px;height:13.35px;"><svg style="position:absolute;left:0;top:0" width="11.3" height="11.3" viewBox="0 0 11 11"><path d="M2.4,5.2 L4.6,7.6 L8.6,2.8" fill="none" stroke="#25a02c" stroke-width="2.2"/></svg></div>

<div class="chk" style="left:395.25px;top:127.35px;width:13.35px;height:13.35px;"><svg style="position:absolute;left:0;top:0" width="11.3" height="11.3" viewBox="0 0 11 11"><path d="M2.4,5.2 L4.6,7.6 L8.6,2.8" fill="none" stroke="#25a02c" stroke-width="2.2"/></svg></div>



<div class="inp" style="left:480.00px;top:154.65px;width:27.00px;height:21.30px;"></div>
<div class="spin" style="left:508.80px;top:155.55px;width:15.00px;height:19.50px;"><svg style="position:absolute;left:0;top:0" width="13.00" height="17.50" viewBox="0 0 10 14"><path d="M2.6,5.4 L5,3 L7.4,5.4 M2.6,8.6 L5,11 L7.4,8.6" fill="none" stroke="#3c55a4" stroke-width="1.6"/></svg></div>
<div class="grp" style="left:557.70px;top:55.05px;width:129.00px;height:137.40px;"></div>

<div class="inp" style="left:591.00px;top:81.75px;width:51.90px;height:21.90px;"></div>
<div class="spin" style="left:644.40px;top:82.65px;width:14.70px;height:20.10px;"><svg style="position:absolute;left:0;top:0" width="12.70" height="18.10" viewBox="0 0 10 14"><path d="M2.6,5.4 L5,3 L7.4,5.4 M2.6,8.6 L5,11 L7.4,8.6" fill="none" stroke="#3c55a4" stroke-width="1.6"/></svg></div>

<div class="inp" style="left:591.00px;top:151.05px;width:51.90px;height:21.60px;"></div>
<div class="spin" style="left:644.40px;top:151.95px;width:14.70px;height:19.80px;"><svg style="position:absolute;left:0;top:0" width="12.70" height="17.80" viewBox="0 0 10 14"><path d="M2.6,5.4 L5,3 L7.4,5.4 M2.6,8.6 L5,11 L7.4,8.6" fill="none" stroke="#3c55a4" stroke-width="1.6"/></svg></div>
<div class="btn" style="left:711.45px;top:57.15px;width:76.05px;height:41.10px;"></div>

<svg style="position:absolute;left:744.90px;top:61.35px" width="36.00" height="36.00" viewBox="-12 -12 24 24"><defs><linearGradient id="wg" x1="1" y1="0" x2="0" y2="1"><stop offset="0" stop-color="#8a6a20"/><stop offset="0.5" stop-color="#c8a444"/><stop offset="1" stop-color="#ecd684"/></linearGradient><clipPath id="wc"><circle cx="1.1" cy="-1.1" r="9.1"/></clipPath></defs><circle r="10.8" fill="url(#wg)"/><circle cx="1.1" cy="-1.1" r="9.1" fill="#120e08"/><g clip-path="url(#wc)"><g transform="rotate(48)"><rect x="-13" y="-1.9" width="26" height="7.3" fill="#2a9a3c"/><rect x="-13" y="-0.2" width="26" height="2.2" fill="#4cc060"/><rect x="-13" y="4.2" width="26" height="1.2" fill="#1f7a2c"/></g><path d="M-2.8,-9.6 L4.2,-9 L4.8,-4.2 L-0.4,-4 Z" fill="#d02a2a"/><path d="M5.2,1 L9.4,1 L8.6,4.6 L5.6,4.4 Z" fill="#d02a2a"/><path d="M4.6,-4.4 L6.2,-2.6 L4.4,-2.4 Z M6,-1.8 L7.6,0 L5.6,0.2 Z" fill="#e8e8e0"/></g><circle cx="-1" cy="0.3" r="1.9" fill="#f2fbe8"/></svg>
<div class="btn" style="left:711.45px;top:117.45px;width:78.45px;height:23.40px;"></div>

<div class="inp" style="left:711.00px;top:172.05px;width:43.20px;height:20.40px;"></div>
<div class="spin" style="left:755.40px;top:172.95px;width:14.40px;height:18.60px;"><svg style="position:absolute;left:0;top:0" width="12.40" height="16.60" viewBox="0 0 10 14"><path d="M2.6,5.4 L5,3 L7.4,5.4 M2.6,8.6 L5,11 L7.4,8.6" fill="none" stroke="#3c55a4" stroke-width="1.6"/></svg></div>
<div class="grp" style="left:370.35px;top:225.00px;width:196.50px;height:146.85px;"></div>
<div class="grp" style="left:609.00px;top:225.00px;width:196.50px;height:146.85px;"></div>


<div class="grp" style="left:370.50px;top:447.45px;width:195.90px;height:95.40px;"></div>
<div class="grp" style="left:608.70px;top:447.45px;width:196.50px;height:95.40px;"></div>
</div></div>
<div class="tl"><div class="title" style="top:89.03px;left:140.90px;transform-origin:0 50%;">falco roulette simulator</div><div class="hn" style="top:119.23px;left:-14.00px;width:200px;text-align:right;transform-origin:100% 50%;color:#ff2222;">36</div><div class="hn" style="top:134.88px;left:-34.80px;width:200px;text-align:right;transform-origin:100% 50%;color:#30ff30;">0</div><div class="hn" style="top:150.53px;left:-14.00px;width:200px;text-align:right;transform-origin:100% 50%;color:#ff2222;">34</div><div class="hn" style="top:166.18px;left:-14.00px;width:200px;text-align:right;transform-origin:100% 50%;color:#ff2222;">19</div><div class="hn" style="top:181.83px;left:-53.80px;width:200px;text-align:right;transform-origin:100% 50%;color:#ffffa0;">28</div><div class="hn" style="top:197.48px;left:-53.80px;width:200px;text-align:right;transform-origin:100% 50%;color:#ffffa0;">6</div><div class="hn" style="top:213.13px;left:-53.80px;width:200px;text-align:right;transform-origin:100% 50%;color:#ffffa0;">28</div><div class="hn" style="top:228.78px;left:-14.00px;width:200px;text-align:right;transform-origin:100% 50%;color:#ff2222;">14</div><div class="hn" style="top:244.43px;left:-14.00px;width:200px;text-align:right;transform-origin:100% 50%;color:#ff2222;">19</div><div class="hn" style="top:260.08px;left:-14.00px;width:200px;text-align:right;transform-origin:100% 50%;color:#ff2222;">5</div><div class="hn" style="top:275.73px;left:-14.00px;width:200px;text-align:right;transform-origin:100% 50%;color:#ff2222;">9</div><div class="hn" style="top:291.38px;left:-34.80px;width:200px;text-align:right;transform-origin:100% 50%;color:#30ff30;">0</div><div class="hn" style="top:307.03px;left:-14.00px;width:200px;text-align:right;transform-origin:100% 50%;color:#ff2222;">5</div><div class="hn" style="top:322.68px;left:-14.00px;width:200px;text-align:right;transform-origin:100% 50%;color:#ff2222;">3</div><div class="hn" style="top:338.33px;left:-14.00px;width:200px;text-align:right;transform-origin:100% 50%;color:#ff2222;">14</div><div class="hn" style="top:353.98px;left:-14.00px;width:200px;text-align:right;transform-origin:100% 50%;color:#ff2222;">34</div><div class="hn" style="top:369.63px;left:-53.80px;width:200px;text-align:right;transform-origin:100% 50%;color:#ffffa0;">26</div><div class="hn" style="top:385.28px;left:-53.80px;width:200px;text-align:right;transform-origin:100% 50%;color:#ffffa0;">2</div><div class="hn" style="top:400.93px;left:-14.00px;width:200px;text-align:right;transform-origin:100% 50%;color:#ff2222;">12</div><div class="hn" style="top:416.58px;left:-53.80px;width:200px;text-align:right;transform-origin:100% 50%;color:#ffffa0;">22</div><div class="hn" style="top:432.23px;left:-14.00px;width:200px;text-align:right;transform-origin:100% 50%;color:#ff2222;">32</div><div class="t" style="top:396.58px;left:142.70px;width:200px;text-align:center;transform-origin:50% 50%;">Back</div><div class="t" style="top:396.58px;left:222.00px;width:200px;text-align:center;transform-origin:50% 50%;">Forward</div><div class="t" style="top:430.68px;left:182.20px;width:200px;text-align:center;transform-origin:50% 50%;">Statistics</div><div class="gl" style="top:115.23px;left:373.80px;transform-origin:0 50%;">Game</div><div class="t" style="top:132.63px;left:398.30px;transform-origin:0 50%;">Low - High</div><div class="t" style="top:150.63px;left:398.30px;transform-origin:0 50%;">Even -Odd</div><div class="t" style="top:167.73px;left:398.30px;transform-origin:0 50%;">Red - Black</div><div class="t" style="top:182.63px;left:386.60px;transform-origin:0 50%;">repeats</div><div class="t" style="top:191.83px;left:386.60px;transform-origin:0 50%;">before play:</div><div class="iv" style="top:187.73px;left:445.40px;transform-origin:0 50%;">3</div><div class="gl" style="top:115.23px;left:498.80px;transform-origin:0 50%;">Bets</div><div class="t" style="top:126.33px;left:517.60px;transform-origin:0 50%;">Starting:</div><div class="iv" style="top:139.33px;left:519.40px;transform-origin:0 50%;">10</div><div class="t" style="top:170.53px;left:517.60px;transform-origin:0 50%;">Maximum:</div><div class="iv" style="top:185.43px;left:519.40px;transform-origin:0 50%;">320</div><div class="t" style="top:129.73px;left:600.80px;transform-origin:0 50%;">Auto</div><div class="t" style="top:163.53px;left:523.45px;width:200px;text-align:center;transform-origin:50% 50%;">Reset</div><div class="t" style="top:185.53px;left:597.40px;transform-origin:0 50%;">Delay (ms)</div><div class="iv" style="top:199.03px;left:599.40px;transform-origin:0 50%;">100</div><div class="gl" style="top:228.53px;left:373.90px;transform-origin:0 50%;">Martingale</div><div class="t" style="top:262.83px;left:380.80px;transform-origin:0 50%;">Actual Win:</div><div class="t" style="top:262.83px;left:437.90px;transform-origin:0 50%;">-300</div><div class="t" style="top:279.83px;left:380.80px;transform-origin:0 50%;">Top Win:</div><div class="t" style="top:279.83px;left:437.90px;transform-origin:0 50%;">370</div><div class="t" style="top:296.83px;left:380.80px;transform-origin:0 50%;">Bottom:</div><div class="t" style="top:296.83px;left:437.90px;transform-origin:0 50%;">-520</div><div class="t" style="top:313.83px;left:380.80px;transform-origin:0 50%;">Breakdowns:</div><div class="t" style="top:313.83px;left:437.90px;transform-origin:0 50%;">1</div><div class="gl" style="top:228.53px;left:533.00px;transform-origin:0 50%;">Modified Martingale</div><div class="t" style="top:262.83px;left:539.90px;transform-origin:0 50%;">Actual Win:</div><div class="t" style="top:262.83px;left:597.00px;transform-origin:0 50%;">-295</div><div class="t" style="top:279.83px;left:539.90px;transform-origin:0 50%;">Top Win:</div><div class="t" style="top:279.83px;left:597.00px;transform-origin:0 50%;">360</div><div class="t" style="top:296.83px;left:539.90px;transform-origin:0 50%;">Bottom:</div><div class="t" style="top:296.83px;left:597.00px;transform-origin:0 50%;">-545</div><div class="t" style="top:313.83px;left:539.90px;transform-origin:0 50%;">Breakdowns:</div><div class="t" style="top:313.83px;left:597.00px;transform-origin:0 50%;">1</div><div class="tb" style="top:348.33px;left:370.20px;transform-origin:0 50%;">Status: &nbsp; Low number Bet</div><div class="tb" style="top:348.33px;left:529.00px;transform-origin:0 50%;">Number of Rounds: 162</div><div class="gl" style="top:376.83px;left:374.00px;transform-origin:0 50%;">Repetitions</div><div class="gl" style="top:376.83px;left:441.50px;transform-origin:0 50%;">with 0</div><div class="gl" style="top:376.83px;left:465.50px;transform-origin:0 50%;">without 0</div><div class="t" style="top:392.63px;left:375.60px;transform-origin:0 50%;">Low - High:</div><div class="t" style="top:392.63px;left:357.00px;width:200px;text-align:center;transform-origin:50% 50%;">5</div><div class="t" style="top:392.63px;left:385.30px;width:200px;text-align:center;transform-origin:50% 50%;">1</div><div class="t" style="top:409.63px;left:375.60px;transform-origin:0 50%;">Even - Odd:</div><div class="t" style="top:409.63px;left:357.00px;width:200px;text-align:center;transform-origin:50% 50%;">3</div><div class="t" style="top:409.63px;left:385.30px;width:200px;text-align:center;transform-origin:50% 50%;">1</div><div class="t" style="top:426.63px;left:375.60px;transform-origin:0 50%;">Red - Black:</div><div class="t" style="top:426.63px;left:357.00px;width:200px;text-align:center;transform-origin:50% 50%;">4</div><div class="t" style="top:426.63px;left:385.30px;width:200px;text-align:center;transform-origin:50% 50%;">1</div><div class="gl" style="top:376.83px;left:532.80px;transform-origin:0 50%;">Max.Repetitions</div><div class="gl" style="top:376.83px;left:600.30px;transform-origin:0 50%;">with 0</div><div class="gl" style="top:376.83px;left:624.30px;transform-origin:0 50%;">without 0</div><div class="t" style="top:392.63px;left:534.40px;transform-origin:0 50%;">Low - High:</div><div class="t" style="top:392.63px;left:515.80px;width:200px;text-align:center;transform-origin:50% 50%;">9</div><div class="t" style="top:392.63px;left:544.10px;width:200px;text-align:center;transform-origin:50% 50%;">9</div><div class="t" style="top:409.63px;left:534.40px;transform-origin:0 50%;">Even - Odd:</div><div class="t" style="top:409.63px;left:515.80px;width:200px;text-align:center;transform-origin:50% 50%;">8</div><div class="t" style="top:409.63px;left:544.10px;width:200px;text-align:center;transform-origin:50% 50%;">8</div><div class="t" style="top:426.63px;left:534.40px;transform-origin:0 50%;">Red - Black:</div><div class="t" style="top:426.63px;left:515.80px;width:200px;text-align:center;transform-origin:50% 50%;">9</div><div class="t" style="top:426.63px;left:544.10px;width:200px;text-align:center;transform-origin:50% 50%;">5</div></div>
</body></html>
